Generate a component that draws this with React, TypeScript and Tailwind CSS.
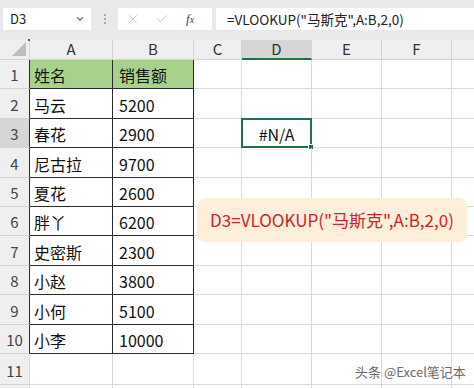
import { Check, X, ChevronDown } from "lucide-react";

type RowData = {
  n: number;
  h: string;
  name?: string;
  amount?: string;
  blank?: boolean;
};

const rows: RowData[] = [
  { n: 1, h: "h-[29px]", name: "姓名", amount: "销售额" },
  { n: 2, h: "h-[30px]", name: "马云", amount: "5200" },
  { n: 3, h: "h-[29px]", name: "春花", amount: "2900" },
  { n: 4, h: "h-[30px]", name: "尼古拉", amount: "9700" },
  { n: 5, h: "h-[29px]", name: "夏花", amount: "2600" },
  { n: 6, h: "h-[29px]", name: "胖丫", amount: "6200" },
  { n: 7, h: "h-[30px]", name: "史密斯", amount: "2300" },
  { n: 8, h: "h-[29px]", name: "小赵", amount: "3800" },
  { n: 9, h: "h-[30px]", name: "小何", amount: "5100" },
  { n: 10, h: "h-[29px]", name: "小李", amount: "10000" },
  { n: 11, h: "h-[31px]" },
  { n: 12, h: "h-[6px]", blank: true },
];

const font = "font-['Noto_Sans_CJK_SC',sans-serif]";

function ColHeader({ label, w, active }: { label: string; w: string; active?: boolean }) {
  return (
    <div
      className={`${w} flex h-full shrink-0 items-center justify-center border-r border-[#d4d4d4] text-[15px] text-[#333] ${
        active ? "border-b-2 border-b-[#217346] bg-[#d6d6d6]" : "border-b border-b-[#d4d4d4]"
      }`}
    >
      {label}
    </div>
  );
}

function Row({ row }: { row: RowData }) {
  const inTable = row.n <= 10;
  const header = row.n === 1;
  const selected = row.n === 3;
  const tableCell = inTable
    ? `border-r border-b border-[#2b2b2b] ${header ? "bg-[#a9d18e]" : "bg-white"}`
    : "border-r border-b border-[#dadada]";

  return (
    <div className={`${row.h} flex`}>
      <div
        className={`flex w-[30px] shrink-0 items-end justify-center pb-[2px] text-[15px] text-[#444] border-b border-[#d4d4d4] ${
          selected ? "bg-[#d6d6d6]" : "bg-[#efefef]"
        } ${inTable ? "border-r border-r-[#2b2b2b]" : "border-r border-r-[#d4d4d4]"}`}
      >
        {row.blank ? null : row.n}
      </div>
      <div className={`flex w-[83px] shrink-0 items-center pl-[4px] pt-[2px] text-[16px] text-[#111] ${tableCell}`}>
        {row.name}
      </div>
      <div className={`flex w-[81px] shrink-0 items-center pl-[6px] pt-[2px] text-[16px] text-[#111] ${tableCell}`}>
        {row.amount}
      </div>
      <div className="w-[48px] shrink-0 border-r border-b border-[#dadada]" />
      <div className="relative w-[70px] shrink-0 border-r border-b border-[#dadada]">
        {selected && (
          <div className="absolute inset-[-1px] flex items-center justify-center border-2 border-[#217346] pt-[2px] text-[16px] text-[#111]">
            #N/A
            <div className="absolute bottom-[-4px] right-[-4px] h-[6px] w-[6px] border border-white bg-[#217346]" />
          </div>
        )}
      </div>
      <div className="w-[70px] shrink-0 border-r border-b border-[#dadada]" />
      <div className="w-[70px] shrink-0 border-r border-b border-[#dadada]" />
      <div className="w-[22px] shrink-0 border-b border-[#dadada]" />
    </div>
  );
}

export default function App() {
  return (
    <div className={`relative h-[388px] w-[474px] overflow-hidden bg-white ${font}`}>
      {/* formula bar */}
      <div className="flex h-[40px] items-start bg-[#e9e9e9] pt-[8px]">
        <div className="ml-[3px] flex h-[22px] w-[88px] items-center justify-between bg-white pl-[7px] pr-[6px] text-[13px] text-[#222]">
          <span>D3</span>
          <ChevronDown size={10} strokeWidth={3} className="text-[#777]" />
        </div>
        <div className="flex h-[22px] w-[27px] flex-col items-center justify-center gap-[2px]">
          <span className="h-[2px] w-[2px] bg-[#aaa]" />
          <span className="h-[2px] w-[2px] bg-[#aaa]" />
          <span className="h-[2px] w-[2px] bg-[#aaa]" />
        </div>
        <div className="flex h-[22px] w-[94px] items-center bg-white">
          <X size={14} strokeWidth={1.5} className="ml-[8px] text-[#c4c4c4]" />
          <Check size={14} strokeWidth={1.5} className="ml-[15px] text-[#c4c4c4]" />
          <span className="ml-[17px] font-['Liberation_Serif',serif] text-[13px] italic text-[#444]">
            f<span className="text-[10px]">x</span>
          </span>
        </div>
        <div className="ml-[4px] flex h-[22px] flex-1 items-center bg-white pl-[11px] text-[13.5px] text-[#222]">
          =VLOOKUP("马斯克",A:B,2,0)
        </div>
      </div>

      {/* column headers */}
      <div className="flex h-[20px] bg-[#efefef]">
        <div className="relative w-[30px] shrink-0 border-r border-b border-[#d4d4d4]">
          <div className="absolute bottom-[3px] right-[3px] h-0 w-0 border-b-[14px] border-l-[14px] border-b-[#bdbdbd] border-l-transparent" />
          <div className="absolute right-[-1px] top-[-1px] h-[2px] w-[2px] bg-[#555]" />
        </div>
        <ColHeader label="A" w="w-[83px]" />
        <ColHeader label="B" w="w-[81px]" />
        <ColHeader label="C" w="w-[48px]" />
        <ColHeader label="D" w="w-[70px]" active />
        <ColHeader label="E" w="w-[70px]" />
        <ColHeader label="F" w="w-[70px]" />
        <div className="w-[22px] shrink-0 border-b border-[#d4d4d4]" />
      </div>

      {rows.map((row) => (
        <Row key={row.n} row={row} />
      ))}

      {/* callout */}
      <div className="absolute left-[197px] top-[198px] flex h-[44px] w-[270px] items-center justify-center rounded-[8px] bg-[#fdefd9] text-[17px] text-[#c9252c]">
        D3=VLOOKUP("马斯克",A:B,2,0)
      </div>

      {/* watermark */}
      <div className="absolute left-[355px] top-[362px] text-[13px] text-[#6a6a6a] [text-shadow:0_0_2px_#fff]">
        头条 @Excel笔记本
      </div>
    </div>
  );
}
